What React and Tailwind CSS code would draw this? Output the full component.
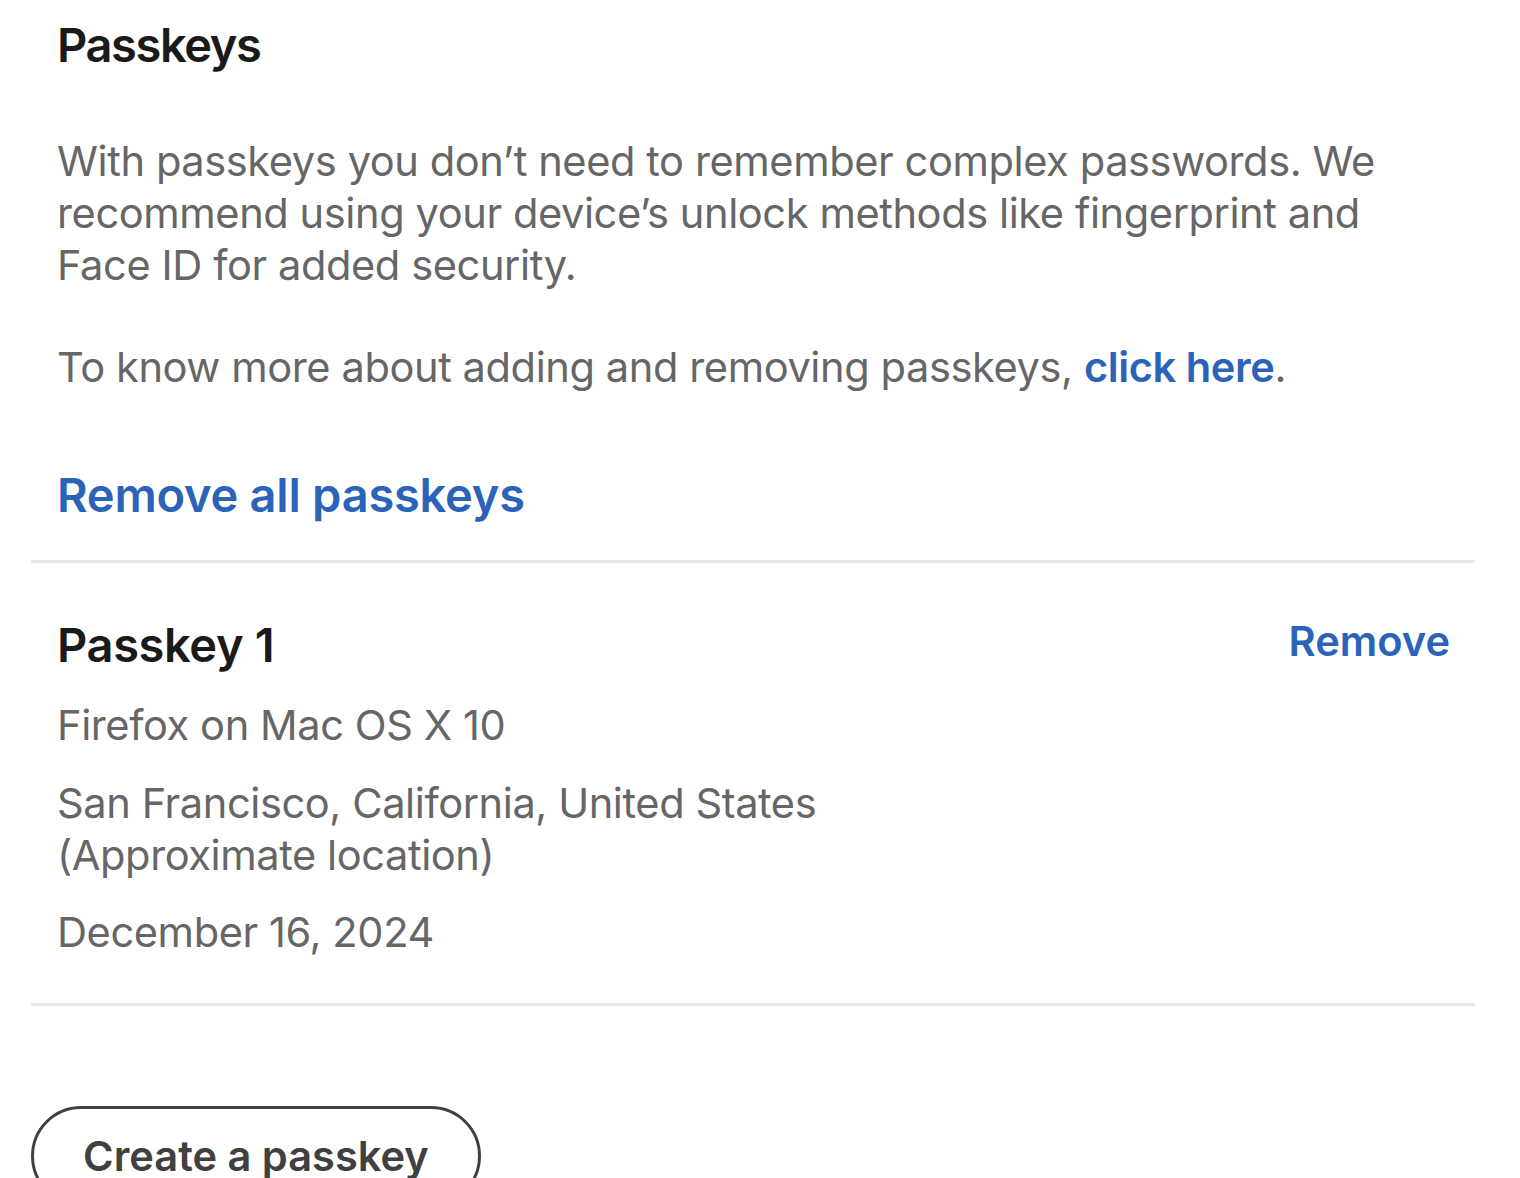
import React from 'react'

const passkeys = [
  {
    id: 1,
    nombre: 'Passkey 1',
    dispositivo: 'Firefox on Mac OS X 10',
    lugar: 'San Francisco, California, United States (Approximate location)',
    fecha: 'December 16, 2024',
  },
]

function PasskeyItem({ item }) {
  return (
    <div className="flex items-start justify-between pl-[26px] pr-[25px] pt-[52px] pb-[45px] border-b-[3px] border-[#e9e9e9]">
      <div className="flex flex-col">
        <div className="text-[47px] leading-[60px] font-semibold text-[#1a1a1a] tracking-[-0.008em]">{item.nombre}</div>
        <div className="mt-[24px] text-[#666666]">{item.dispositivo}</div>
        <div className="mt-[26px] text-[#666666] max-w-[800px]">{item.lugar}</div>
        <div className="mt-[25px] text-[#666666]">{item.fecha}</div>
      </div>
      <button type="button" className="font-semibold text-[#2b63b9] leading-[52px] tracking-normal">
        Remove
      </button>
    </div>
  )
}

export default function App() {
  return (
    <div
      className="min-h-screen bg-white text-[41.6px] leading-[52px] tracking-[-0.01em] overflow-hidden"
      style={{ fontFamily: 'Inter, "Noto Sans", sans-serif' }}
    >
      <div className="pl-[31px] pr-[45px]">
        <div className="pl-[26px] pt-[15px] pb-[35px] border-b-[3px] border-[#e9e9e9]">
          <h2 className="text-[47px] leading-[60px] font-semibold text-[#1a1a1a] tracking-[-0.03em]">Passkeys</h2>
          <p className="mt-[60px] text-[#666666] max-w-[1340px]">
            With passkeys you don’t need to remember complex passwords. We recommend using your device’s unlock methods like fingerprint and Face ID for added security.
          </p>
          <p className="mt-[50px] text-[#666666]">
            To know more about adding and removing passkeys,{' '}
            <a href="#" className="font-semibold text-[#2b63b9]">click here</a>.
          </p>
          <button type="button" className="mt-[72px] block text-[47px] leading-[60px] font-semibold text-[#2b63b9] tracking-[-0.005em]">
            Remove all passkeys
          </button>
        </div>

        {passkeys.map((item) => (
          <PasskeyItem key={item.id} item={item} />
        ))}

        <div className="pt-[100px]">
          <button
            type="button"
            className="h-[100px] px-[49px] rounded-full border-[3px] border-[#404040] text-[#404040] font-semibold tracking-normal"
          >
            Create a passkey
          </button>
        </div>
      </div>
    </div>
  )
}
